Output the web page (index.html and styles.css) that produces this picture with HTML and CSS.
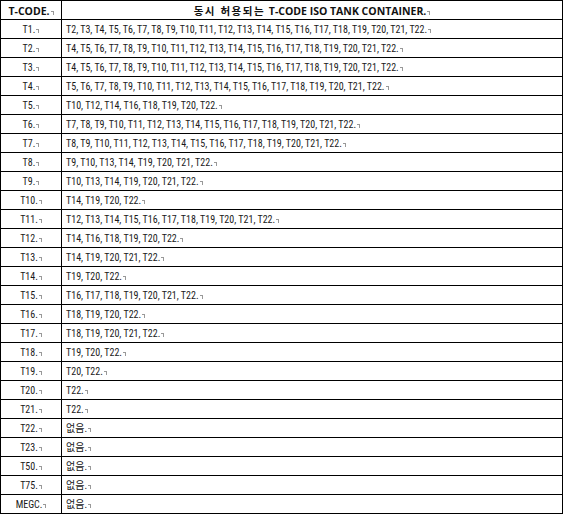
FILE: index.html
```html
<!DOCTYPE html>
<html lang="ko">
<head>
<meta charset="utf-8">
<title>T-CODE ISO TANK CONTAINER</title>
<link rel="stylesheet" href="styles.css">
</head>
<body>
<table class="tcode">
  <colgroup><col class="c1"><col class="c2"></colgroup>
  <thead>
    <tr><th>T-CODE.<span class="pm"></span></th><th><span class="ko">동시 허용되는</span> T-CODE ISO TANK CONTAINER.<span class="pm"></span></th></tr>
  </thead>
  <tbody>
    <tr><td class="k">T1.<span class="pm"></span></td><td>T2, T3, T4, T5, T6, T7, T8, T9, T10, T11, T12, T13, T14, T15, T16, T17, T18, T19, T20, T21, T22.<span class="pm"></span></td></tr>
    <tr><td class="k">T2.<span class="pm"></span></td><td>T4, T5, T6, T7, T8, T9, T10, T11, T12, T13, T14, T15, T16, T17, T18, T19, T20, T21, T22.<span class="pm"></span></td></tr>
    <tr><td class="k">T3.<span class="pm"></span></td><td>T4, T5, T6, T7, T8, T9, T10, T11, T12, T13, T14, T15, T16, T17, T18, T19, T20, T21, T22.<span class="pm"></span></td></tr>
    <tr><td class="k">T4.<span class="pm"></span></td><td>T5, T6, T7, T8, T9, T10, T11, T12, T13, T14, T15, T16, T17, T18, T19, T20, T21, T22.<span class="pm"></span></td></tr>
    <tr><td class="k">T5.<span class="pm"></span></td><td>T10, T12, T14, T16, T18, T19, T20, T22.<span class="pm"></span></td></tr>
    <tr><td class="k">T6.<span class="pm"></span></td><td>T7, T8, T9, T10, T11, T12, T13, T14, T15, T16, T17, T18, T19, T20, T21, T22.<span class="pm"></span></td></tr>
    <tr><td class="k">T7.<span class="pm"></span></td><td>T8, T9, T10, T11, T12, T13, T14, T15, T16, T17, T18, T19, T20, T21, T22.<span class="pm"></span></td></tr>
    <tr><td class="k">T8.<span class="pm"></span></td><td>T9, T10, T13, T14, T19, T20, T21, T22.<span class="pm"></span></td></tr>
    <tr><td class="k">T9.<span class="pm"></span></td><td>T10, T13, T14, T19, T20, T21, T22.<span class="pm"></span></td></tr>
    <tr><td class="k">T10.<span class="pm"></span></td><td>T14, T19, T20, T22.<span class="pm"></span></td></tr>
    <tr><td class="k">T11.<span class="pm"></span></td><td>T12, T13, T14, T15, T16, T17, T18, T19, T20, T21, T22.<span class="pm"></span></td></tr>
    <tr><td class="k">T12.<span class="pm"></span></td><td>T14, T16, T18, T19, T20, T22.<span class="pm"></span></td></tr>
    <tr><td class="k">T13.<span class="pm"></span></td><td>T14, T19, T20, T21, T22.<span class="pm"></span></td></tr>
    <tr><td class="k">T14.<span class="pm"></span></td><td>T19, T20, T22.<span class="pm"></span></td></tr>
    <tr><td class="k">T15.<span class="pm"></span></td><td>T16, T17, T18, T19, T20, T21, T22.<span class="pm"></span></td></tr>
    <tr><td class="k">T16.<span class="pm"></span></td><td>T18, T19, T20, T22.<span class="pm"></span></td></tr>
    <tr><td class="k">T17.<span class="pm"></span></td><td>T18, T19, T20, T21, T22.<span class="pm"></span></td></tr>
    <tr><td class="k">T18.<span class="pm"></span></td><td>T19, T20, T22.<span class="pm"></span></td></tr>
    <tr><td class="k">T19.<span class="pm"></span></td><td>T20, T22.<span class="pm"></span></td></tr>
    <tr><td class="k">T20.<span class="pm"></span></td><td>T22.<span class="pm"></span></td></tr>
    <tr><td class="k">T21.<span class="pm"></span></td><td>T22.<span class="pm"></span></td></tr>
    <tr><td class="k">T22.<span class="pm"></span></td><td><span class="ko">없음</span>.<span class="pm"></span></td></tr>
    <tr><td class="k">T23.<span class="pm"></span></td><td><span class="ko">없음</span>.<span class="pm"></span></td></tr>
    <tr><td class="k">T50.<span class="pm"></span></td><td><span class="ko">없음</span>.<span class="pm"></span></td></tr>
    <tr><td class="k">T75.<span class="pm"></span></td><td><span class="ko">없음</span>.<span class="pm"></span></td></tr>
    <tr><td class="k">MEGC.<span class="pm"></span></td><td><span class="ko">없음</span>.<span class="pm"></span></td></tr>
  </tbody>
</table>
</body>
</html>
```
FILE: styles.css
```css
html, body {
  margin: 0;
  padding: 0;
  background: #fff;
}
body {
  font-family: "Open Sans", "Noto Sans CJK KR", sans-serif;
  font-size: 10.5px;
  color: #111;
}
.tcode {
  width: 563px;
  border-collapse: separate;
  border-spacing: 0;
  border-left: 1px solid #000;
  border-top: 1px solid #000;
  table-layout: fixed;
}
.c1 { width: 61px; }
.tcode tr { height: 19px; }
.tcode th,
.tcode td {
  border-right: 1px solid #000;
  border-bottom: 1px solid #000;
  padding: 1px 0 0 4px;
  white-space: nowrap;
  line-height: 14px;
  vertical-align: middle;
  overflow: hidden;
}
.tcode td {
  font-family: Roboto, "Noto Sans CJK KR", sans-serif;
  font-size: 10px;
  font-stretch: 78%;
  color: #1a1a1a;
}
.tcode th {
  font-weight: bold;
  text-align: center;
  padding: 1px 0 0 0;
}
.tcode td.k {
  text-align: center;
  padding: 1px 0 0 0;
}
.ko {
  font-family: "Noto Sans CJK KR", sans-serif;
}
th .ko {
  letter-spacing: 1.5px;
  margin-right: 1px;
}
.pm {
  display: inline-block;
  width: 2px;
  height: 3px;
  margin-left: 1px;
  border-top: 1px solid #999;
  border-right: 1px solid #999;
  vertical-align: 0;
}
```
